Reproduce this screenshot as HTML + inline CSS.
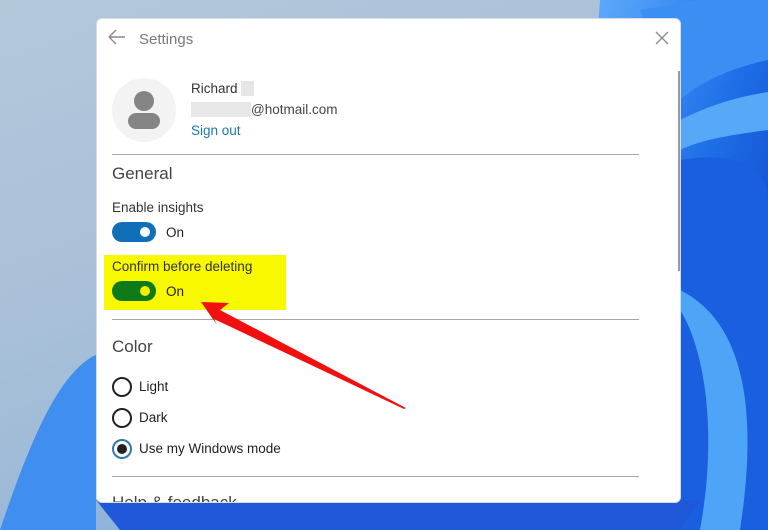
<!DOCTYPE html>
<html><head><meta charset="utf-8"><style>
*{margin:0;padding:0;box-sizing:border-box}
body{width:768px;height:530px;overflow:hidden;position:relative;font-family:"Liberation Sans",sans-serif;
background:linear-gradient(160deg,#b4c8dc 0%,#a9c0d8 40%,#9fbbd8 60%,#5e9be6 100%);}
.t{position:absolute;white-space:nowrap}
.dlg{position:absolute;left:96px;top:18px;width:585px;height:485px;background:#fff;border-radius:6px;overflow:hidden;border:1px solid #d8dde3}
.hr{position:absolute;left:15px;width:527px;height:1px;background:#a8a8a8}
.tog{position:absolute;width:44px;height:20px;border-radius:10px}
.tog i{position:absolute;right:6px;top:5px;width:10px;height:10px;border-radius:50%;background:#fff}
.rad{position:absolute;width:20px;height:20px;border-radius:50%;border:2px solid #222}
.s{font-size:13.5px}
</style></head><body>
<svg width="768" height="530" style="position:absolute;left:0;top:0">
<defs><linearGradient id="g" x1="0" y1="0" x2="1" y2="1"><stop offset="0" stop-color="#6ab8ff"/><stop offset="0.5" stop-color="#1e6ee8"/><stop offset="1" stop-color="#0a2fb0"/></linearGradient></defs>
<path d="M600 0 L768 0 L768 530 L560 530 Z" fill="url(#g)"/>
<path d="M640 10 C700 0 740 -10 768 0 L768 60 C720 70 690 90 680 100 Z" fill="#3b8ef2"/>
<path d="M680 120 C720 100 750 95 768 92 L768 130 C730 135 700 140 680 150Z" fill="#58a8f8"/>
<path d="M680 160 C740 150 768 170 768 200 L768 530 L680 530 Z" fill="#1a5fe0"/>
<path d="M680 290 C740 320 760 400 740 530 L700 530 C720 420 700 340 680 310Z" fill="#4ea4f6"/>
<path d="M60 390 C80 360 96 355 96 355 L96 530 L0 530 C20 470 40 420 60 390Z" fill="#3f8ef0"/>
<path d="M96 500 L700 500 L680 530 L120 530Z" fill="#1f58d8"/>
</svg>
<div class="dlg">
<svg class="t" style="left:10px;top:10px" width="20" height="16"><path d="M2 8 H18 M2 8 L9 1 M2 8 L9 15" stroke="#8a8a8a" stroke-width="1.4" fill="none"/></svg>
<div class="t" style="left:42px;top:12px;font-size:15px;color:#7a7a7a">Settings</div>
<svg class="t" style="left:558px;top:12px" width="14" height="14"><path d="M1 1L13 13M13 1L1 13" stroke="#8a8a8a" stroke-width="1.3"/></svg>
<div style="position:absolute;left:581px;top:52px;width:2px;height:200px;background:#9a9a9a"></div>
<div style="position:absolute;left:15px;top:59px;width:64px;height:64px;border-radius:50%;background:#f3f3f3"></div>
<div style="position:absolute;left:37px;top:72px;width:20px;height:20px;border-radius:50%;background:#858585"></div>
<div style="position:absolute;left:31px;top:94px;width:32px;height:16px;border-radius:8px;background:#858585"></div>
<div class="t s" style="left:94px;top:62px;color:#333">Richard <span style="background:#e6e6e6;color:#e6e6e6">W</span></div>
<div class="t s" style="left:94px;top:83px;color:#444"><span style="background:#e8e8e8;color:#e8e8e8;display:inline-block;width:60px">x</span>@hotmail.com</div>
<div class="t s" style="left:94px;top:104px;color:#1a7ab0">Sign out</div>
<div class="hr" style="top:135px"></div>
<div class="t" style="left:15px;top:145px;font-size:17px;color:#444">General</div>
<div class="t s" style="left:15px;top:181px;color:#333">Enable insights</div>
<div class="tog" style="left:15px;top:203px;background:#0f6fb8"><i></i></div>
<div class="t s" style="left:69px;top:206px;color:#222">On</div>
<div style="position:absolute;left:7px;top:236px;width:182px;height:55px;background:#f8f800"></div>
<div class="t s" style="left:15px;top:240px;color:#333">Confirm before deleting</div>
<div class="tog" style="left:15px;top:262px;background:#0f7a18"><i style="background:#f0f000"></i></div>
<div class="t s" style="left:69px;top:265px;color:#222">On</div>
<div class="hr" style="top:300px"></div>
<div class="t" style="left:15px;top:318px;font-size:17px;color:#444">Color</div>
<div class="rad" style="left:15px;top:358px"></div>
<div class="t s" style="left:42px;top:360px;color:#222">Light</div>
<div class="rad" style="left:15px;top:389px"></div>
<div class="t s" style="left:42px;top:391px;color:#222">Dark</div>
<div class="rad" style="left:15px;top:420px;border-color:#2e7aa8"><div style="position:absolute;left:3px;top:3px;width:10px;height:10px;border-radius:50%;background:#222"></div></div>
<div class="t s" style="left:42px;top:422px;color:#222">Use my Windows mode</div>
<div class="hr" style="top:457px"></div>
<div class="t" style="left:15px;top:474px;font-size:17px;color:#444">Help &amp; feedback</div>
</div>
<svg width="768" height="530" style="position:absolute;left:0;top:0">
<path d="M201 302 L229 303 L220 310 L406 408 L404 409 L214 319 L217 325 Z" fill="#f01010"/>
</svg>
</body></html>
